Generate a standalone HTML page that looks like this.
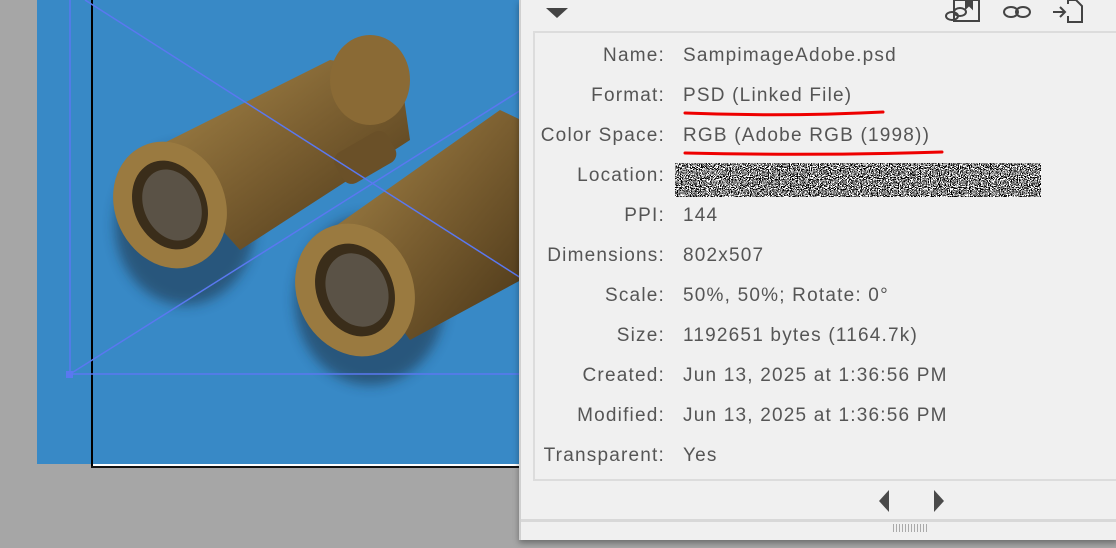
<!DOCTYPE html>
<html><head><style>
body{margin:0;width:1116px;height:548px;overflow:hidden;background:#a6a6a6;position:relative;font-family:"Liberation Sans",sans-serif}
.a{position:absolute}
.row{position:absolute;left:533px;width:580px;height:40px;font-size:19px;color:#555;line-height:40px;letter-spacing:1.2px}
.row .l{position:absolute;right:448px;text-align:right;white-space:nowrap}
.row .v{position:absolute;left:150px;white-space:nowrap}
</style></head><body>
<div class="a" style="left:37px;top:0;width:484px;height:464px;background:#3889c6"></div>
<div class="a" style="left:91px;top:0;width:2px;height:467px;background:#000"></div>
<div class="a" style="left:93px;top:464px;width:428px;height:2px;background:#fff"></div>
<div class="a" style="left:91px;top:466px;width:430px;height:2px;background:#111"></div>
<svg class="a" style="left:0;top:0" width="521" height="470">
<defs><filter id="sh"><feGaussianBlur stdDeviation="6"/></filter>
<linearGradient id="br" x1="0" y1="0" x2="1" y2="1"><stop offset="0" stop-color="#a8884a"/><stop offset=".5" stop-color="#7a5e30"/><stop offset="1" stop-color="#4a3618"/></linearGradient></defs>
<g fill="#1d2d40" opacity=".55" filter="url(#sh)"><ellipse cx="185" cy="225" rx="70" ry="80"/><ellipse cx="370" cy="300" rx="75" ry="85"/></g>
<path d="M150 150 L330 60 L400 70 L410 140 L240 250 Z" fill="url(#br)"/>
<path d="M330 230 L500 110 L521 120 L521 280 L410 340 Z" fill="url(#br)"/>
<ellipse cx="370" cy="80" rx="40" ry="45" fill="#8a6a35"/>
<ellipse cx="170" cy="205" rx="55" ry="65" fill="#9a7a40" transform="rotate(-25 170 205)"/>
<ellipse cx="170" cy="205" rx="36" ry="46" fill="#3a2d1a" transform="rotate(-25 170 205)"/>
<ellipse cx="172" cy="205" rx="28" ry="37" fill="#5a5246" transform="rotate(-25 172 205)"/>
<ellipse cx="355" cy="290" rx="58" ry="68" fill="#9a7a40" transform="rotate(-25 355 290)"/>
<ellipse cx="355" cy="290" rx="38" ry="48" fill="#3a2d1a" transform="rotate(-25 355 290)"/>
<ellipse cx="357" cy="290" rx="30" ry="38" fill="#5a5246" transform="rotate(-25 357 290)"/>
<rect x="335" y="140" width="60" height="35" rx="10" fill="#6a5028" transform="rotate(-30 365 157)"/>
<g stroke="#5a78f0" stroke-width="1.5" fill="none">
<line x1="70" y1="0" x2="70" y2="374"/><line x1="70" y1="374" x2="521" y2="374"/>
<line x1="70" y1="374" x2="521" y2="90"/><line x1="85" y1="0" x2="521" y2="278"/></g>
<rect x="66" y="371" width="7" height="7" fill="#5a78f0"/>
</svg>
<div class="a" style="left:519px;top:0;width:597px;height:540px;background:#f0f0f0;border-left:2px solid #d0d0d0;box-shadow:0 3px 6px rgba(0,0,0,.35)"></div>
<div class="a" style="left:546px;top:8px;width:0;height:0;border-left:11px solid transparent;border-right:11px solid transparent;border-top:10px solid #444"></div>
<svg class="a" style="left:940px;top:0" width="176" height="26" fill="none" stroke="#444" stroke-width="2">
<rect x="14" y="0" width="25" height="21"/><path d="M32 0v8l-3-3-3 3V0" fill="#444"/>
<ellipse cx="12" cy="16" rx="6" ry="4"/><ellipse cx="20" cy="12" rx="6" ry="4"/>
<ellipse cx="71" cy="12" rx="7" ry="5"/><ellipse cx="83" cy="12" rx="7" ry="5"/>
<path d="M113 12h12M120 7l5 5-5 5"/><path d="M128 4V0h8l6 6v16h-14v-6"/>
</svg>
<div class="a" style="left:533px;top:31px;width:583px;height:446px;border:2px solid #dcdcdc;border-right:none"></div>
<div class="row" style="top:36px"><span class="l">Name:</span><span class="v">SampimageAdobe.psd</span></div>
<div class="row" style="top:76px"><span class="l">Format:</span><span class="v">PSD (Linked File)</span></div>
<div class="row" style="top:116px"><span class="l">Color Space:</span><span class="v">RGB (Adobe RGB (1998))</span></div>
<div class="row" style="top:156px"><span class="l">Location:</span></div>
<div class="row" style="top:196px"><span class="l">PPI:</span><span class="v">144</span></div>
<div class="row" style="top:236px"><span class="l">Dimensions:</span><span class="v">802x507</span></div>
<div class="row" style="top:276px"><span class="l">Scale:</span><span class="v">50%, 50%; Rotate: 0°</span></div>
<div class="row" style="top:316px"><span class="l">Size:</span><span class="v">1192651 bytes (1164.7k)</span></div>
<div class="row" style="top:356px"><span class="l">Created:</span><span class="v">Jun 13, 2025 at 1:36:56 PM</span></div>
<div class="row" style="top:396px"><span class="l">Modified:</span><span class="v">Jun 13, 2025 at 1:36:56 PM</span></div>
<div class="row" style="top:436px"><span class="l">Transparent:</span><span class="v">Yes</span></div>
<svg class="a" style="left:683px;top:108px" width="270" height="50"><path d="M2 5 Q100 9 200 4" stroke="#e00" stroke-width="3" fill="none" stroke-linecap="round"/><path d="M2 45 Q130 48 259 44" stroke="#e00" stroke-width="3" fill="none" stroke-linecap="round"/></svg>
<svg class="a" style="left:675px;top:163px" width="366" height="34"><filter id="n"><feTurbulence type="fractalNoise" baseFrequency="0.9" numOctaves="1" seed="3"/><feColorMatrix type="saturate" values="0"/><feComponentTransfer><feFuncR type="discrete" tableValues="0 1"/><feFuncG type="discrete" tableValues="0 1"/><feFuncB type="discrete" tableValues="0 1"/><feFuncA type="linear" slope="0" intercept="1"/></feComponentTransfer></filter><rect width="366" height="34" filter="url(#n)"/></svg>
<div class="a" style="left:879px;top:490px;width:0;height:0;border-top:11px solid transparent;border-bottom:11px solid transparent;border-right:10px solid #4a4a4a"></div>
<div class="a" style="left:934px;top:490px;width:0;height:0;border-top:11px solid transparent;border-bottom:11px solid transparent;border-left:10px solid #4a4a4a"></div>
<div class="a" style="left:521px;top:519px;width:595px;height:3px;background:#d8d8d8"></div>
<div class="a" style="left:893px;top:524px;width:34px;height:8px;background:repeating-linear-gradient(90deg,#aaa 0 1px,transparent 1px 3px)"></div>
</body></html>
